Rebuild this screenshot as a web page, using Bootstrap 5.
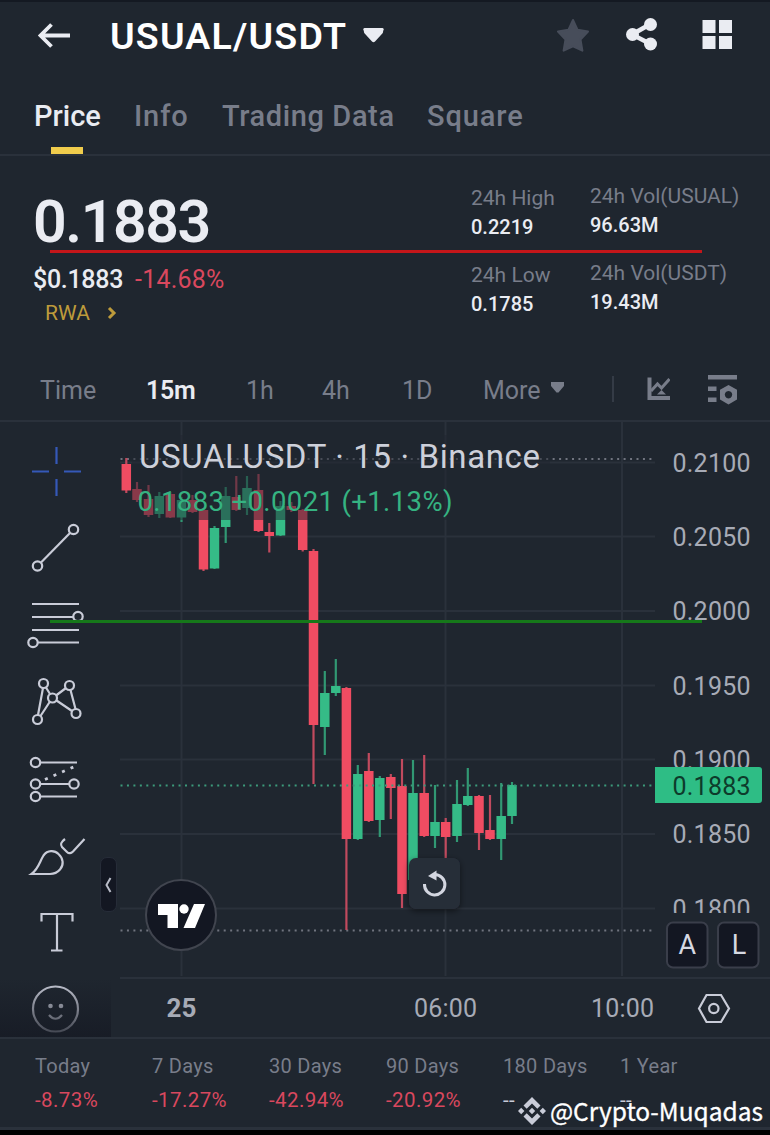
<!DOCTYPE html>
<html lang="en" data-bs-theme="dark">
<head>
<meta charset="utf-8">
<meta name="viewport" content="width=device-width, initial-scale=1">
<title>USUAL/USDT</title>
<link href="https://cdn.jsdelivr.net/npm/bootstrap@5.3.0/dist/css/bootstrap.min.css" rel="stylesheet">
<style>
  :root { --bg:#1f262f; --rule:#2a313b; --mut:#787d8a; --fg:#eaecf2; --down:#d9485e; --up:#2ebd85; }
  body { background:#000; color:var(--fg); font-family:Roboto,"Liberation Sans",sans-serif; overflow:hidden; }
  .screen { width:770px; height:1130px; background:var(--bg); border-top:2px solid #141922; border-bottom:3px solid #2a313b; }
  .topbar { height:72px; padding:0 37px 4px 37px; }
  .pair { font-size:37.5px; font-weight:600; line-height:44px; letter-spacing:1.2px; color:#fff; margin-left:39px; }
  .tabs { height:82px; padding:22px 0 0 34px; border-bottom:2px solid var(--rule); font-size:29px; font-weight:500; line-height:40px; color:var(--mut); display:grid; grid-template-columns:100px 88px 205px auto; align-items:start; }
  .tabs .here { color:var(--fg); width:67px; position:relative; }
  .tabs .here::after { content:""; position:absolute; left:17px; top:51px; width:32px; height:7px; background:#f0cc4c; }
  .tabs .wide { letter-spacing:.9px; }
  .tabs .mid { letter-spacing:.6px; }
  .quote { height:202px; padding:32px 0 0 33px; display:grid; grid-template-columns:438px 119px auto; }
  .big { font-size:59px; font-weight:600; line-height:68px; letter-spacing:-1.4px; }
  .usd { font-size:25px; line-height:30px; margin-top:9px; font-weight:500; letter-spacing:-.3px; }
  .usd .chg { color:var(--down); font-weight:400; margin-left:12px; letter-spacing:.2px; }
  .tag { color:#bd9b3b; font-size:21px; line-height:26px; margin:5px 0 0 12px; }
  .stats-a { margin-top:-4px; }
  .stats-b { margin-top:-6px; }
  .stat { font-size:21px; line-height:28px; color:var(--mut); white-space:nowrap; }
  .stat b { display:block; font-weight:500; font-size:20px; color:var(--fg); line-height:30px; }
  .stat + .stat { margin-top:19px; }
  .frames { height:64px; border-bottom:2px solid var(--rule); font-size:25px; line-height:65px; color:var(--mut); padding-left:40px; display:grid; grid-template-columns:106px 100px 76px 80px 81px 129px 34px 61px auto; white-space:nowrap; }
  .frames .here { color:var(--fg); font-weight:600; letter-spacing:-.3px; }
  .frames .glyph { line-height:60px; }
  .tools { width:120px; padding-top:11px; }
  .tools svg { width:60px; height:77px; margin-left:27px; fill:none; stroke:#c9ccd8; stroke-width:2.2; flex:none; }
  .board { height:615px; overflow:hidden; }
  .fade-foot { left:0; bottom:0; width:111px; height:58px; background:linear-gradient(rgba(22,26,36,0),rgba(22,26,36,.8)); }
  .fold { left:100px; top:435px; width:17px; height:55px; border-radius:7px; background:#131722; border:1px solid #262c38; }
  .level { left:50px; width:652px; height:3px; }
  .perf { border-top:2px solid var(--rule); padding:13px 0 0 35px; display:grid; grid-template-columns:repeat(5,117px) auto; font-size:20px; line-height:28px; color:var(--mut); white-space:nowrap; letter-spacing:.3px; }
  .perf b { display:block; font-weight:400; font-size:20.5px; color:var(--down); line-height:28px; margin-top:6px; letter-spacing:.4px; }
  .perf .none { color:#c9ccd8; }
  .sign { right:7px; bottom:-2px; font:400 24.5px/36px "Noto Sans CJK SC","Noto Sans",sans-serif; color:#fff; }
  .sign span { -webkit-text-stroke:.3px #fff; }
</style>
</head>
<body>
<main class="screen position-relative">
  <header class="topbar d-flex align-items-center">
    <svg width="34" height="26" viewBox="37 22 34 26" fill="none" stroke="#eaecf2" stroke-width="3.800"><path d="M70 34.500H40M51.500 23.500 40.500 34.500 51.500 45.500"/></svg>
    <span class="pair">USUAL/USDT</span>
    <svg class="ms-3" width="22" height="16" viewBox="0 0 22 16" fill="#eaecf2"><path d="M2 0h17a1.500 1.500 0 0 1 1.300 2.500l-.5 2.500-7.800 8.500q-1.500 1.500-3 0L1.200 5 .7 2.500A1.500 1.500 0 0 1 2 0z"/></svg>
    <svg class="ms-auto" width="176" height="40" viewBox="557 16 176 40">
      <path fill="#474d5a" stroke="#474d5a" stroke-width="2" stroke-linejoin="round" d="M573 20l4.600 9.800 10.400 1.700-7.500 8 1.900 11.200-9.400-4.400-9.400 4.400 1.900-11.200-7.500-8 10.400-1.700z"/>
      <g fill="#eaecf2"><path d="M650.500 24 632 34.500l18.500 9.500" fill="none" stroke="#eaecf2" stroke-width="4.500"/><circle cx="650.500" cy="24.500" r="6.500"/><circle cx="632.500" cy="34.500" r="6.500"/><circle cx="650.500" cy="44" r="6.500"/>
      <path d="M702.500 20h13v13h-13zM719 20h13v13h-13zM702.500 36h13v13h-13zM719 36h13v13h-13z"/></g>
    </svg>
  </header>

  <nav class="tabs">
    <span class="here">Price</span><span class="wide">Info</span><span class="mid">Trading Data</span><span class="wide">Square</span>
  </nav>

  <section class="quote">
    <div>
      <div class="big">0.1883</div>
      <div class="usd">$0.1883<span class="chg">-14.68%</span></div>
      <div class="tag d-flex align-items-center">RWA<svg class="ms-3" width="12" height="14" viewBox="0 0 12 14" fill="none" stroke="#bd9b3b" stroke-width="3"><path d="M3 2l5 5-5 5"/></svg></div>
    </div>
    <div class="stats-a">
      <div class="stat">24h High<b>0.2219</b></div>
      <div class="stat">24h Low<b>0.1785</b></div>
    </div>
    <div class="stats-b">
      <div class="stat">24h Vol(USUAL)<b>96.63M</b></div>
      <div class="stat">24h Vol(USDT)<b>19.43M</b></div>
    </div>
  </section>

  <nav class="frames">
    <span>Time</span><span class="here">15m</span><span>1h</span><span>4h</span><span>1D</span>
    <span>More <svg width="18" height="12" viewBox="-3 0 18 12" fill="#787d8a" style="vertical-align:5px"><path d="M1 0h13v4L8.500 10.500h-2L1 4z"/></svg></span>
    <span class="glyph"><svg width="2" height="26" viewBox="0 0 2 26"><path d="M1 0v26" stroke="#343b46" stroke-width="2"/></svg></span>
    <span class="glyph"><svg width="24" height="24" viewBox="647 375 24 24" fill="none" stroke="#787d8a"><path d="M650.500 375.500v20.500h21" stroke-width="4"/><path d="M652 389l6.500-7 4 4 8-9" stroke-width="3"/><path d="M658 392.500l4.500-4.500 4.500 4.500z" fill="#787d8a" stroke="none"/></svg></span>
    <span class="glyph"><svg width="32" height="32" viewBox="708 371 32 32" fill="#787d8a"><path d="M709 373h29v4.500h-29zM709 384.500h8.500v4.500H709zM709 395.500h8.500v4.500H709z"/><path fill-rule="evenodd" d="M729.500 383l8.500 4.800v9.700l-8.500 4.900-8.500-4.900v-9.700zm0 6a3.700 3.700 0 1 0 .01 0z"/></svg></span>
  </nav>

  <section class="board position-relative d-flex">
    <div class="tools d-flex flex-column">
      <svg viewBox="27 433 60 77" style="stroke:#3558b8"><path d="M56.500 447v17M56.500 479v17M32 471.500h17M64 471.500h17"/></svg>
      <svg viewBox="27 510 60 77"><circle cx="73.500" cy="529.500" r="4.700"/><circle cx="37.500" cy="566" r="4.700"/><path d="M70 533 41 562.500"/></svg>
      <svg viewBox="27 587 60 77"><path d="M32 604h47M32 617h41M32 630h47M38 642.500h41"/><circle cx="78" cy="616.500" r="4.700"/><circle cx="33" cy="642.500" r="4.700"/></svg>
      <svg viewBox="27 664 60 77"><circle cx="43.500" cy="683.500" r="4.500"/><circle cx="69.500" cy="685.500" r="4.500"/><circle cx="52.500" cy="698" r="4.500"/><circle cx="76" cy="713.500" r="4.500"/><circle cx="37.500" cy="719.500" r="4.500"/><path d="M43 688l-5 27M46 687.500l4 6.500M56 695.500l10-7.500M70.500 690l5 19M56.500 700.500l15.500 10.500M50 701.500l-9.500 14.500"/></svg>
      <svg viewBox="27 741 60 77"><circle cx="35.500" cy="762.500" r="4.700"/><circle cx="35.500" cy="784" r="4.700"/><circle cx="74" cy="784" r="4.700"/><circle cx="35.500" cy="796.500" r="4.700"/><path d="M40 762.500h37M40 784h29M40 796.500h37"/><path d="M45 779.500l32-14" stroke-width="2.800" stroke-dasharray="3 6.300"/></svg>
      <svg viewBox="27 818 60 77"><path d="M31.500 874c7-5 8-12 12-18.500 4-5.500 11-5.500 15-1.500 5 4.500 5.500 11 1.500 15.500-3 3.500-6 4.500-10 4.500zM65 839c-4 3-5 5-3 8l5 5c2 2 4 1.500 6-.5L84.500 839"/></svg>
      <svg viewBox="27 895 60 77"><path d="M41.500 921.500V914h31v7.500M57 914v36M51 950.500h11.500"/></svg>
      <svg viewBox="27 972 60 77"><circle cx="55.500" cy="1009" r="22.500"/><path d="M49 1015q6.500 7.500 13 0"/><g fill="#c9ccd8" stroke="none"><circle cx="50.500" cy="1006" r="2.300"/><circle cx="61" cy="1006" r="2.300"/></g></svg>
    </div>
    <svg width="650" height="615" viewBox="120 422 650 615" font-family="Roboto,'Liberation Sans',sans-serif">
      <defs><clipPath id="axis"><path d="M655 422h115v491H655z"/></clipPath>
      <filter id="soft" x="-20%" y="-20%" width="140%" height="150%"><feDropShadow dx="0" dy="2" stdDeviation="3" flood-opacity=".5"/></filter></defs>
      <path d="M120 462.500h535M120 536.500h535M120 611h535M120 685.500h535M120 759.500h535M120 834h535M120 908.500h535M181.500 422v554M445.500 422v554M622 422v554M120 978h650" stroke="#2a313b" stroke-width="2" fill="none"/>
      <path d="M120.500 459H655M120.500 930.500H655" stroke="#70747f" stroke-width="2" stroke-dasharray="2 4.450"/>
      <g id="candles"></g>
      <path d="M132 435h418v43h-87v42H132z" fill="#1f262f" fill-opacity=".5"/>
      <path d="M120.500 785.500H655" stroke="#3c9a7b" stroke-width="2" stroke-dasharray="2 4.450"/>
      <text x="139" y="467.500" font-size="33" fill="#cdd0da" textLength="401">USUALUSDT · 15 · Binance</text>
      <text x="137.500" y="511" font-size="27.500" fill="#35b381" textLength="315">0.1883 +0.0021 (+1.13%)</text>
      <g clip-path="url(#axis)" font-size="25" fill="#a7abb6">
        <text x="672.500" y="471.500" textLength="78">0.2100</text><text x="672.500" y="545.500" textLength="78">0.2050</text><text x="672.500" y="620" textLength="78">0.2000</text><text x="672.500" y="694.500" textLength="78">0.1950</text><text x="672.500" y="768.500" textLength="78">0.1900</text><text x="672.500" y="843" textLength="78">0.1850</text><text x="672.500" y="917.500" textLength="78">0.1800</text>
      </g>
      <path d="M655 767h104q3 0 3 3v30q0 3-3 3H655z" fill="#2ebd85"/>
      <text x="672.500" y="794.500" font-size="25" fill="#0d3b2b" textLength="78">0.1883</text>
      <g fill="#131722" stroke="#3a3e4a" stroke-width="2"><rect x="667" y="922.500" width="40.500" height="45" rx="6"/><rect x="718" y="922.500" width="40.500" height="45" rx="6"/></g>
      <g font-size="27" fill="#d6d9e2" text-anchor="middle"><text x="687.300" y="954">A</text><text x="739" y="954">L</text></g>
      <rect x="409" y="858" width="51" height="51" rx="7" fill="#272e39" filter="url(#soft)"/>
      <path d="M424.500 884a10.200 10.200 0 1 0 10.200-9.500" fill="none" stroke="#d3d6e0" stroke-width="3"/><path d="M428 876l8.500-5.500v10z" fill="#d3d6e0"/>
      <circle cx="181" cy="915" r="35" fill="#131722" stroke="#41454f" stroke-width="2"/>
      <g fill="#fff"><path d="M158 904h20v24h-10.500v-13H158z"/><circle cx="184" cy="909" r="4.700"/><path d="M194 904h11l-10 24h-11.500z"/></g>
      <g font-size="25" fill="#a7abb6" text-anchor="middle"><text x="181.500" y="1017" font-size="26" font-weight="700">25</text><text x="445.500" y="1017" textLength="63">06:00</text><text x="622.500" y="1017" textLength="63">10:00</text></g>
      <g fill="none" stroke="#c9ccd8" stroke-width="2.200"><path d="M706.500 995h14.500l8 13.500-8 13.500h-14.500l-7.500-13.500z"/><circle cx="713.800" cy="1008.500" r="4.700"/></g>
    </svg>
    <div class="fade-foot position-absolute"></div>
    <div class="fold position-absolute d-flex align-items-center justify-content-center"><svg width="7" height="16" viewBox="0 0 7 16" fill="none" stroke="#b9bcc8" stroke-width="2"><path d="M5.500 1 1.500 8l4 7"/></svg></div>
    <div class="level position-absolute" style="top:198px;background:#16781a"></div>
  </section>

  <section class="perf">
    <div>Today<b>-8.73%</b></div><div>7 Days<b>-17.27%</b></div><div>30 Days<b>-42.94%</b></div><div>90 Days<b>-20.92%</b></div><div>180 Days<b class="none">--</b></div><div>1 Year<b class="none">--</b></div>
  </section>

  <div class="level position-absolute" style="top:248px;background:#c4161a"></div>
  <div class="sign position-absolute d-flex align-items-center"><svg class="me-1" width="28" height="28" viewBox="0 0 28 28" fill="#c9ccd8"><path d="M14 0l8.500 8.500-3.200 3.200L14 6.400l-5.300 5.300-3.200-3.200zM14 28l8.500-8.500-3.200-3.200-5.300 5.300-5.300-5.300-3.200 3.200zM0 14l3.200-3.200L6.400 14l-3.200 3.200zM21.600 14l3.200-3.200L28 14l-3.200 3.200zM10.800 14l3.200-3.200 3.200 3.200-3.200 3.200z"/></svg><span>@Crypto-Muqadas</span></div>
</main>
<script src="https://cdn.jsdelivr.net/npm/bootstrap@5.3.0/dist/js/bootstrap.bundle.min.js"></script>
<script>
  // x centre, body top, body bottom, wick top, wick bottom, rising
  const bars = [
    [126.3,464,490.5,458,493,0],[137,489,500,482,502,0],[148.5,499,515,485,517,0],[159.3,496,514,492,518,1],
    [170.3,494,517.5,492,518,0],[181.5,500,517.5,497,522,1],[192.5,500,512,495,513,0],[203.5,510,569.5,508,571,0],
    [214.5,528,568.5,526,569,1],[225.7,496,527,487,543,1],[236.3,497,510,476,511,0],[247,488,508,476,515,1],
    [258.5,490,531,474,532,0],[269.3,532,536,523,552.5,0],[280.5,506,535.500,501,536,1],[291.3,506,510,502,512,0],
    [302.7,510,550,509,551.5,0],[313.5,551,725,549,784,0],[324.8,693,727,671,755,1],[335.8,686,693,659,696,1],
    [346.4,688,839,687,930,0],[357.8,774,839,765,840,1],[368.8,771,821,753,822,0],[379.8,778,820,776,837,1],
    [390.8,777,788,774,819,0],[402,786,894,759,908,0],[413,793,880,760,881,1],[424.2,793,836,755,837,0],
    [435,822,836,785,848,1],[445.7,822,837,818,860,0],[457,804,836,780,842,1],[467.8,796,805,768,806,1],
    [479,796,833,795,850,0],[490,830,839,795,840,0],[501.2,816,839,783,860,1],[512,785,816,782,824,1]
  ];
  document.getElementById('candles').innerHTML = bars.map(([x,a,b,h,l,up]) =>
    `<path d="M${x} ${h}V${l}" stroke="${up ? '#319873' : '#c14a5e'}" stroke-width="2.2"/><path d="M${x} ${a}V${b}" stroke="${up ? '#35bb87' : '#f04c62'}" stroke-width="9.500"/>`).join('');
</script>
</body>
</html>
